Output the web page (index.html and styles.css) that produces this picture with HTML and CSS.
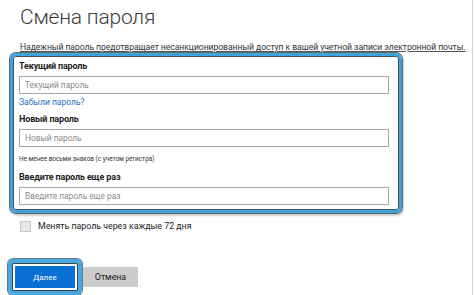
FILE: index.html
```html
<!DOCTYPE html>
<html lang="ru">
<head>
    <meta charset="UTF-8">
    <title>Смена пароля</title>
    <link rel="stylesheet" href="styles.css">
</head>
<body>
    <div class="page">
        <h1 class="title">Смена пароля</h1>
        <p class="intro">Надежный пароль предотвращает несанкционированный доступ к вашей учетной записи электронной почты.</p>

        <div class="fields">
            <label class="field-label" for="current">Текущий пароль</label>
            <input class="field-input" type="password" id="current" placeholder="Текущий пароль">
            <a class="forgot" href="#">Забыли пароль?</a>

            <label class="field-label" for="newpass">Новый пароль</label>
            <input class="field-input" type="password" id="newpass" placeholder="Новый пароль">
            <div class="hint">Не менее восьми знаков (с учетом регистра)</div>

            <label class="field-label" for="repeat">Введите пароль еще раз</label>
            <input class="field-input" type="password" id="repeat" placeholder="Введите пароль еще раз">
        </div>

        <label class="check-row">
            <span class="check-box"></span>
            <span>Менять пароль через каждые 72 дня</span>
        </label>

        <div class="actions">
            <span class="focus-ring"><button class="btn btn-primary" type="button">Далее</button></span>
            <button class="btn btn-cancel" type="button">Отмена</button>
        </div>
    </div>
</body>
</html>
```

FILE: styles.css
```css
body {
    margin: 0;
    background-color: #fff;
    font-family: Roboto, "Noto Sans", sans-serif;
    color: #222;
    overflow: hidden;
}
.page {
    height: 295px;
    width: 473px;
    padding-left: 20px;
    box-sizing: border-box;
    border-right: 1px solid #d4d4d4;
}
.title {
    margin: 0;
    padding-top: 2px;
    font-weight: 300;
    font-size: 21px;
    line-height: 30px;
    letter-spacing: -0.2px;
    color: #3a3a3a;
}
.intro {
    margin: 9px 0 0 0;
    font-size: 8.6px;
    line-height: 12px;
    letter-spacing: -0.05px;
    color: #333;
    text-decoration: underline;
    text-decoration-color: #555;
    white-space: nowrap;
}
.fields {
    display: flex;
    flex-direction: column;
    align-items: flex-start;
    width: 370px;
    margin: 0 0 0 -10px;
    padding: 3px 10px 5px 6px;
    border: 3px solid #3fa3dc;
    border-radius: 6px;
    box-shadow: 0 0 0 1px #5d6a72, inset 0 0 0 1px #4a5258, 1px 2px 3px rgba(0, 0, 0, 0.35);
}
.field-label {
    font-size: 9px;
    font-weight: bold;
    line-height: 14px;
    letter-spacing: -0.15px;
    color: #222;
}
.field-input {
    width: 370px;
    height: 18px;
    margin: 3px 0 0 0;
    padding: 0 5px;
    box-sizing: border-box;
    border: 1px solid #a8a8a8;
    font-family: inherit;
    font-size: 8.3px;
    color: #333;
}
.field-input::placeholder {
    color: #8a8a8a;
}
.forgot {
    margin: 1px 0 3px 0;
    font-size: 8.5px;
    line-height: 14px;
    color: #2a6fc9;
    text-decoration: none;
}
.hint {
    margin: 6px 0 5px 0;
    font-size: 6.4px;
    line-height: 12px;
    color: #333;
}
.check-row {
    display: flex;
    align-items: center;
    gap: 7px;
    margin-top: 6px;
    font-size: 8.8px;
    line-height: 14px;
    color: #222;
}
.check-box {
    width: 9px;
    height: 9px;
    border: 1px solid #c8c8c8;
    background-color: #e8e8e8;
}
.actions {
    display: flex;
    align-items: center;
    gap: 1px;
    margin: 26px 0 0 -12px;
}
.focus-ring {
    display: inline-flex;
    padding: 3px;
    border: 4px solid #45a8e0;
    border-radius: 5px;
    box-shadow: 0 0 0 1px #6d7880, inset 0 0 0 1px #3d454a;
}
.btn {
    height: 22px;
    border: none;
    font-family: inherit;
    padding: 0;
}
.btn-primary {
    width: 60px;
    font-size: 8px;
    background-color: #0a6fd4;
    color: #fff;
}
.btn-cancel {
    width: 55px;
    height: 20px;
    font-size: 8.8px;
    background-color: #cccccc;
    color: #222;
}
```
